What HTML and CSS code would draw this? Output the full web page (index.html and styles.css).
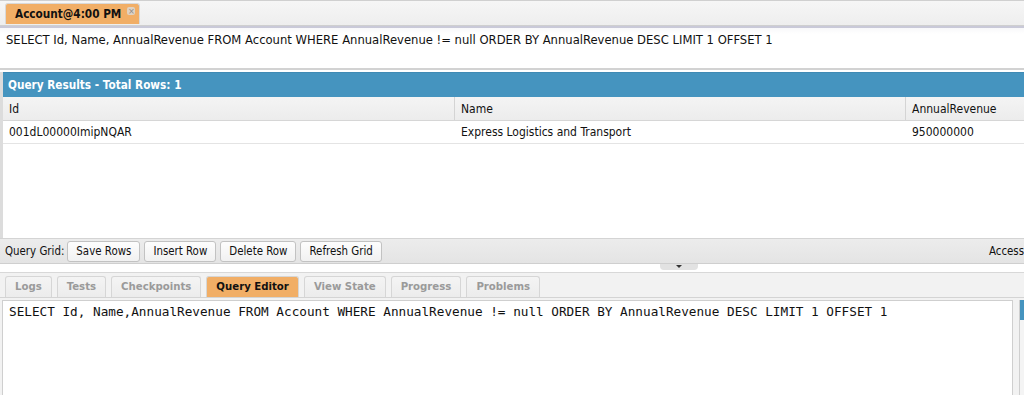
FILE: index.html
```html
<!DOCTYPE html>
<html>
<head>
<meta charset="utf-8">
<link rel="stylesheet" href="styles.css">
</head>
<body>
<div class="app">
  <div class="top-tabs">
    <div class="doc-tab">Account@4:00 PM<span class="close">×</span></div>
  </div>
  <div class="query-box">SELECT Id, Name, AnnualRevenue FROM Account WHERE AnnualRevenue != null ORDER BY AnnualRevenue DESC LIMIT 1 OFFSET 1</div>
  <div class="results">
    <div class="results-title">Query Results - Total Rows: 1</div>
    <div class="grid-head">
      <div class="col c1">Id</div>
      <div class="col c2">Name</div>
      <div class="col c3">AnnualRevenue</div>
    </div>
    <div class="grid-row">
      <div class="col c1">001dL00000ImipNQAR</div>
      <div class="col c2">Express Logistics and Transport</div>
      <div class="col c3">950000000</div>
    </div>
    <div class="grid-empty"></div>
    <div class="toolbar">
      <span class="tb-label">Query Grid:</span>
      <button class="btn">Save Rows</button>
      <button class="btn">Insert Row</button>
      <button class="btn">Delete Row</button>
      <button class="btn">Refresh Grid</button>
      <span class="tb-right">Access</span>
    </div>
  </div>
  <div class="splitter"><div class="handle"><span class="arrow"></span></div></div>
  <div class="bottom-tabs">
    <div class="btab">Logs</div>
    <div class="btab">Tests</div>
    <div class="btab">Checkpoints</div>
    <div class="btab active">Query Editor</div>
    <div class="btab">View State</div>
    <div class="btab">Progress</div>
    <div class="btab">Problems</div>
  </div>
  <div class="editor-wrap">
    <div class="editor">SELECT Id, Name,AnnualRevenue FROM Account WHERE AnnualRevenue != null ORDER BY AnnualRevenue DESC LIMIT 1 OFFSET 1</div>
    <div class="side-panel"></div>
  </div>
</div>
</body>
</html>
```
FILE: styles.css
```css
html, body {
  margin: 0;
  padding: 0;
  width: 1024px;
  height: 395px;
  overflow: hidden;
  background: #ffffff;
}
.app {
  display: flex;
  flex-direction: column;
  height: 395px;
  font-family: "DejaVu Sans Condensed", "DejaVu Sans", sans-serif;
  color: #111;
}
.top-tabs {
  height: 26px;
  box-sizing: border-box;
  border-top: 1px solid #d0d0d0;
  border-bottom: 1px solid #cfcfcf;
  background: linear-gradient(#f6f6f6, #eeeeee);
  display: flex;
  align-items: flex-end;
  padding-left: 5px;
}
.doc-tab {
  height: 21px;
  box-sizing: border-box;
  background: #f1ae66;
  border: 1px solid #d9d9d9;
  border-bottom: none;
  border-radius: 3px 3px 0 0;
  padding: 0 4px 0 9px;
  font-size: 11.7px;
  font-weight: bold;
  line-height: 20px;
  display: flex;
  align-items: center;
  gap: 6px;
  margin-bottom: 1px;
}
.close {
  display: inline-block;
  width: 8px;
  height: 8px;
  background: #e0d2c2;
  color: #8a8a8a;
  font-size: 9px;
  line-height: 8px;
  text-align: center;
  border-radius: 2px;
  font-weight: normal;
  margin-top: -7px;
}
.query-box {
  height: 44px;
  box-sizing: border-box;
  border-top: 2px solid #c9c9d8;
  border-bottom: 2px solid #d2d2d2;
  padding: 3px 6px;
  font-size: 12.9px;
  line-height: 17px;
  background: linear-gradient(#f8f8fa, #ffffff 6px);
}
.results {
  flex: none;
  height: 192px;
  display: flex;
  flex-direction: column;
  border-left: 3px solid #dcdcdc;
  margin-top: 2px;
}
.results-title {
  height: 25px;
  background: #4594bf;
  color: #fff;
  font-weight: bold;
  font-size: 11.7px;
  line-height: 25px;
  padding-left: 5px;
  border-top: 1px solid #3f8ab4;
  box-sizing: border-box;
}
.grid-head, .grid-row {
  display: flex;
}
.grid-head {
  height: 24px;
  background: linear-gradient(#f4f4f4, #ececec);
  border-bottom: 1px solid #d6d6d6;
  box-sizing: border-box;
  font-size: 12px;
  line-height: 24px;
}
.grid-row {
  height: 23px;
  border-bottom: 1px solid #e4e4e4;
  box-sizing: border-box;
  font-size: 12px;
  line-height: 22px;
}
.col {
  padding-left: 6px;
  box-sizing: border-box;
  white-space: nowrap;
  overflow: hidden;
}
.c1 { width: 452px; }
.c2 { width: 451px; }
.c3 { flex: 1; }
.grid-head .c1, .grid-head .c2 { border-right: 1px solid #d4d4d4; }
.grid-empty {
  flex: 1;
  background: #fff;
}
.toolbar {
  height: 26px;
  background: linear-gradient(#ececec, #e4e4e4);
  border-top: 1px solid #d4d4d4;
  border-bottom: 1px solid #cfcfcf;
  box-sizing: border-box;
  display: flex;
  align-items: center;
  gap: 4px;
  font-size: 11.4px;
  margin-left: -3px;
  padding-left: 5px;
}
.tb-label { margin-right: -1px; }
.btn {
  font-family: inherit;
  font-size: 11.4px;
  height: 21px;
  padding: 0 8px;
  background: linear-gradient(#fdfdfd, #f1f1f1);
  border: 1px solid #c2c2c2;
  border-radius: 3px;
  color: #111;
}
.tb-right { margin-left: auto; white-space: nowrap; margin-right: 0; }
.splitter {
  height: 9px;
  background: #fff;
  border-bottom: 1px solid #d8d8d8;
  box-sizing: border-box;
  display: flex;
  justify-content: center;
}
.handle {
  width: 38px;
  height: 6px;
  background: #e2e2e2;
  margin-left: 334px;
  border-radius: 0 0 4px 4px;
  display: flex;
  justify-content: center;
}
.arrow {
  width: 0;
  height: 0;
  border-left: 3px solid transparent;
  border-right: 3px solid transparent;
  border-top: 3px solid #333;
  margin-top: 1px;
}
.bottom-tabs {
  height: 25px;
  background: #f2f2f2;
  border-bottom: 1px solid #d4d4d4;
  box-sizing: border-box;
  display: flex;
  align-items: flex-end;
  gap: 5px;
  padding-left: 5px;
}
.btab {
  height: 21px;
  box-sizing: border-box;
  border: 1px solid #d6d6d6;
  border-bottom: none;
  border-radius: 3px 3px 0 0;
  background: linear-gradient(#f4f4f4, #ececec);
  color: #9a9a9a;
  font-weight: bold;
  font-size: 11.3px;
  line-height: 20px;
  padding: 0 9px;
}
.btab.active {
  background: #f1ae66;
  color: #111;
}
.editor-wrap {
  flex: 1;
  display: flex;
  background: #f2f2f2;
  padding-top: 2px;
}
.editor {
  flex: 1;
  background: #fff;
  border: 1px solid #cfcfcf;
  border-bottom: none;
  margin-left: 2px;
  font-family: "DejaVu Sans Mono", monospace;
  font-size: 12.7px;
  line-height: 16px;
  padding: 3px 6px;
}
.side-panel {
  width: 4px;
  margin-left: 6px;
  border-left: 1px solid #cfcfcf;
  background: linear-gradient(#4594bf 0, #4594bf 20px, #f4f4f4 20px);
}
```
